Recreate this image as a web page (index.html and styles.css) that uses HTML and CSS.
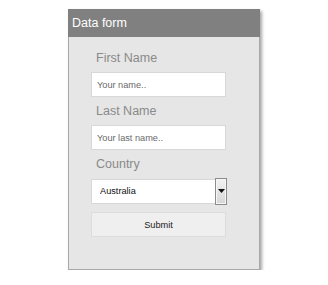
FILE: index.html
```html
<!DOCTYPE html>
<html>
<head>
<meta charset="utf-8">
<link rel="stylesheet" href="styles.css">
</head>
<body>
<div class="panel">
  <div class="header">Data form</div>
  <form class="form">
    <label class="label">First Name</label>
    <input class="field" type="text" placeholder="Your name..">
    <label class="label">Last Name</label>
    <input class="field" type="text" placeholder="Your last name..">
    <label class="label">Country</label>
    <div class="select">
      <span class="select-value">Australia</span>
      <span class="select-btn"><svg width="7" height="5" viewBox="0 0 7 5"><path d="M0 0H7L3.5 4Z" fill="#111"/></svg></span>
    </div>
    <button class="submit" type="button">Submit</button>
  </form>
</div>
</body>
</html>
```
FILE: styles.css
```css
html, body {
  margin: 0;
  padding: 0;
  background: #ffffff;
}
body {
  font-family: "Liberation Sans", Arial, sans-serif;
}
.panel {
  margin: 9px 0 0 68px;
  width: 192px;
  box-sizing: border-box;
  border: 1px solid #a8a8a8;
  background: #e6e6e6;
  box-shadow: 2px 2px 3px rgba(0, 0, 0, 0.35);
}
.header {
  margin: -1px -1px 0 -1px;
  padding: 1px 0 0 4px;
  box-sizing: border-box;
  background: #808080;
  color: #ffffff;
  font-size: 12.5px;
  line-height: 27px;
  height: 28px;
}
.form {
  display: flex;
  flex-direction: column;
  padding: 13px 0 32px 22px;
  margin: 0;
}
.label {
  display: block;
  box-sizing: border-box;
  font-size: 12.5px;
  line-height: 15px;
  height: 15px;
  padding-top: 1px;
  color: #8a8a8a;
  padding-left: 5px;
  margin-bottom: 7px;
}
.field {
  width: 135px;
  height: 25px;
  box-sizing: border-box;
  border: 1px solid #d8d8d8;
  background: #ffffff;
  padding: 0 0 0 5px;
  margin: 0 0 6px 0;
  font-family: "Liberation Sans", Arial, sans-serif;
  font-size: 9.2px;
  color: #333;
  outline: none;
}
.field::placeholder {
  color: #6a6a6a;
}
.select {
  display: flex;
  align-items: center;
  width: 136px;
  height: 26px;
  margin-bottom: 8px;
}
.select-value {
  flex: 1;
  height: 25px;
  box-sizing: border-box;
  border: 1px solid #d8d8d8;
  border-right: none;
  background: #ffffff;
  font-size: 9.2px;
  line-height: 23px;
  color: #111;
  padding-left: 8px;
}
.select-btn {
  width: 12px;
  height: 27px;
  box-sizing: border-box;
  border: 1px solid #8c8c8c;
  box-shadow: inset 0 0 0 1px #f6f6f6;
  background: linear-gradient(#f2f2f2, #d6d6d6);
  display: flex;
  align-items: center;
  justify-content: center;
}
.submit {
  width: 135px;
  height: 25px;
  box-sizing: border-box;
  border: 1px solid #dcdcdc;
  background: #efefef;
  font-family: "Liberation Sans", Arial, sans-serif;
  font-size: 9.2px;
  color: #222;
  padding: 0;
  margin: 0;
}
```
